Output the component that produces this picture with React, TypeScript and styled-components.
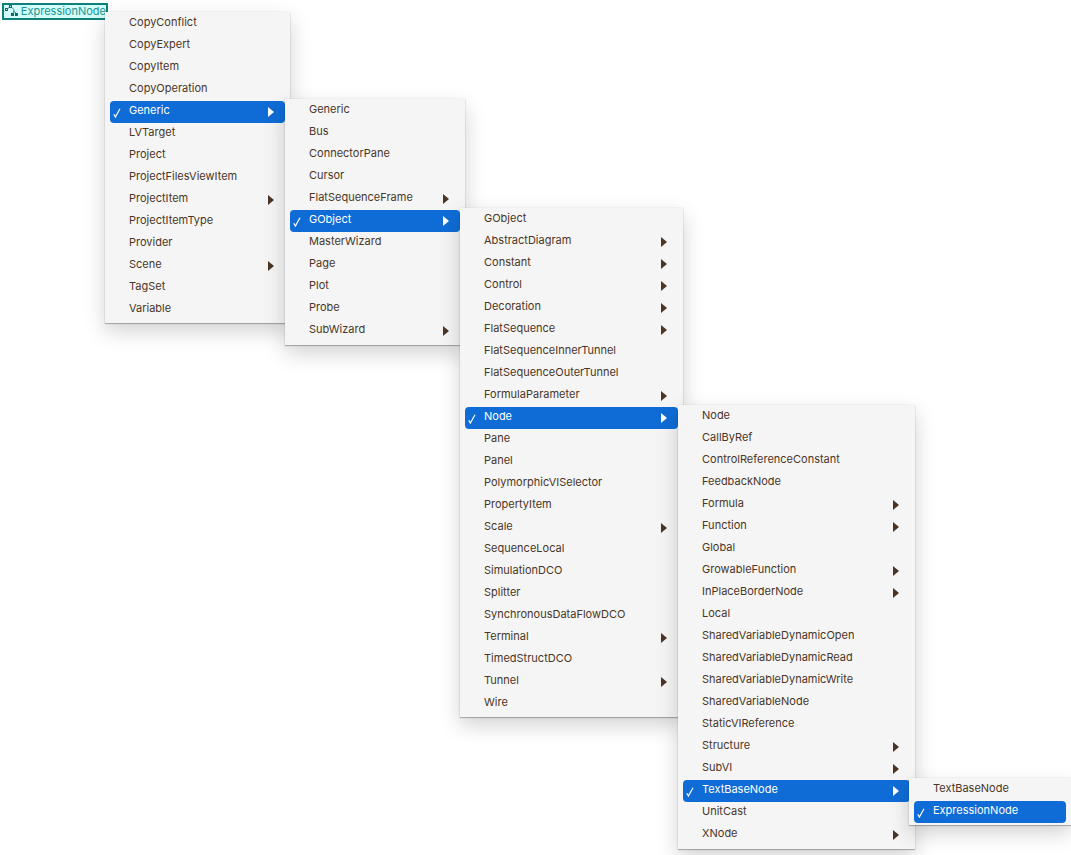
import React from "react";
import styled, { createGlobalStyle } from "styled-components";

const GlobalStyle = createGlobalStyle`
  html, body {
    margin: 0;
    padding: 0;
    background: #ffffff;
    overflow: hidden;
  }
`;

const Page = styled.div`
  position: relative;
  width: 1071px;
  height: 855px;
  overflow: hidden;
  font-family: Inter, "Liberation Sans", sans-serif;
  font-size: 11px;
`;

const NodeLabel = styled.div`
  position: absolute;
  left: 2px;
  top: 3px;
  box-sizing: border-box;
  width: 106px;
  height: 17px;
  display: flex;
  align-items: center;
  gap: 2px;
  padding: 0 0 1px 1px;
  border: 2px solid #0f7f7b;
  background: #d2fdfb;
  color: #1a9590;
  white-space: nowrap;
`;

const Menu = styled.div<{ $x: number; $y: number; $w: number; $bottom: number }>`
  position: absolute;
  left: ${p => p.$x}px;
  top: ${p => p.$y}px;
  width: ${p => p.$w}px;
  box-sizing: border-box;
  padding: 1px 5px ${p => p.$bottom}px;
  background: #f5f5f5;
  box-shadow: 0 1px 1px rgba(0, 0, 0, 0.24), 0 0 1px rgba(0, 0, 0, 0.16), 0 8px 20px rgba(0, 0, 0, 0.18);
`;

const Row = styled.div<{ $active?: boolean }>`
  position: relative;
  height: 22px;
  box-sizing: border-box;
  padding: 0 11px 4px 19px;
  display: flex;
  align-items: center;
  justify-content: space-between;
  border-radius: 4px;
  white-space: nowrap;
  color: ${p => (p.$active ? "#ffffff" : "#4a3527")};
  background: ${p => (p.$active ? "#0f6cd6" : "transparent")};
`;

const Check = styled.svg`
  position: absolute;
  left: 3px;
  top: 7px;
  width: 8px;
  height: 10px;
`;

const Arrow = styled.span<{ $active?: boolean }>`
  width: 0;
  height: 0;
  margin-top: 4px;
  border-top: 5px solid transparent;
  border-bottom: 5px solid transparent;
  border-left: 6px solid ${p => (p.$active ? "#ffffff" : "#4a3527")};
`;

type Item = { label: string; sub?: boolean; active?: boolean };

const parse = (list: string[]): Item[] =>
  list.map(s => ({
    label: s.replace(/[>*]/g, ""),
    sub: s.includes(">"),
    active: s.includes("*"),
  }));

const menus = [
  {
    x: 105, y: 12, w: 185, bottom: 2,
    items: parse(["CopyConflict", "CopyExpert", "CopyItem", "CopyOperation", "*Generic>", "LVTarget", "Project", "ProjectFilesViewItem", "ProjectItem>", "ProjectItemType", "Provider", "Scene>", "TagSet", "Variable"]),
  },
  {
    x: 285, y: 99, w: 180, bottom: 3,
    items: parse(["Generic", "Bus", "ConnectorPane", "Cursor", "FlatSequenceFrame>", "*GObject>", "MasterWizard", "Page", "Plot", "Probe", "SubWizard>"]),
  },
  {
    x: 460, y: 208, w: 223, bottom: 2,
    items: parse(["GObject", "AbstractDiagram>", "Constant>", "Control>", "Decoration>", "FlatSequence>", "FlatSequenceInnerTunnel", "FlatSequenceOuterTunnel", "FormulaParameter>", "*Node>", "Pane", "Panel", "PolymorphicVISelector", "PropertyItem", "Scale>", "SequenceLocal", "SimulationDCO", "Splitter", "SynchronousDataFlowDCO", "Terminal>", "TimedStructDCO", "Tunnel>", "Wire"]),
  },
  {
    x: 678, y: 405, w: 237, bottom: 3,
    items: parse(["Node", "CallByRef", "ControlReferenceConstant", "FeedbackNode", "Formula>", "Function>", "Global", "GrowableFunction>", "InPlaceBorderNode>", "Local", "SharedVariableDynamicOpen", "SharedVariableDynamicRead", "SharedVariableDynamicWrite", "SharedVariableNode", "StaticVIReference", "Structure>", "SubVI>", "*TextBaseNode>", "UnitCast", "XNode>"]),
  },
  {
    x: 909, y: 778, w: 162, bottom: 2,
    items: parse(["TextBaseNode", "*ExpressionNode"]),
  },
];

// tree glyph: two open squares up top, two solid leaves below
const NodeIcon = () => (
  <svg width="14" height="12" viewBox="0 0 14 12" fill="none" stroke="#0d6763" strokeWidth="1">
    <rect x="0.5" y="3.5" width="2" height="2" />
    <rect x="4.5" y="0.5" width="2" height="2" />
    <rect x="6.5" y="8.5" width="2" height="2" fill="#0d6763" />
    <rect x="10.5" y="8.5" width="2" height="2" fill="#0d6763" />
    <path d="M2.5 3.5 L4.5 2.5 M6.5 2 L9 4.5 V7 M9 6.5 L7.5 8.5 M9 6.5 L11.5 8.5" strokeWidth="0.8" />
  </svg>
);

const CheckMark = () => (
  <Check viewBox="0 0 8 10" fill="none" stroke="#ffffff" strokeWidth="1.2">
    <path d="M0.8 6.2 L2.4 9 L7 0.8" />
  </Check>
);

export default function App() {
  return (
    <Page>
      <GlobalStyle />
      <NodeLabel>
        <NodeIcon />
        <span>ExpressionNode</span>
      </NodeLabel>
      {menus.map(m => (
        <Menu key={m.x} $x={m.x} $y={m.y} $w={m.w} $bottom={m.bottom}>
          {m.items.map(item => (
            <Row key={item.label} $active={item.active}>
              {item.active && <CheckMark />}
              <span>{item.label}</span>
              {item.sub && <Arrow $active={item.active} />}
            </Row>
          ))}
        </Menu>
      ))}
    </Page>
  );
}
